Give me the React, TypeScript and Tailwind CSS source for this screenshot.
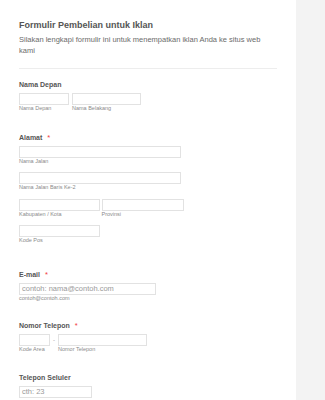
import type { ReactNode } from "react";

const font = { fontFamily: '"Liberation Sans", Arial, sans-serif' };

function Label({ children, required }: { children: ReactNode; required?: boolean }) {
  return (
    <div className="mb-[4px] flex items-center text-[7px] font-bold leading-[9px] text-[#555]">
      <span>{children}</span>
      {required && <span className="ml-[5px] text-[7.5px] font-normal text-[#f23a3c]">*</span>}
    </div>
  );
}

function Field({ width, sub, placeholder }: { width: string; sub?: string; placeholder?: string }) {
  return (
    <div className="flex flex-col">
      <div
        className={`h-[12px] border border-[#e2e2e2] bg-white px-[2px] text-[7.5px] leading-[10px] text-[#9a9a9a] ${width}`}
      >
        {placeholder}
      </div>
      {sub && <div className="text-[5.5px] leading-[7.5px] text-[#8a8a8a]">{sub}</div>}
    </div>
  );
}

export default function App() {
  return (
    <div className="flex h-[400px] w-[325px] overflow-hidden bg-[#f3f3f3]" style={font}>
      <main className="w-[296px] shrink-0 bg-white px-[19px] pt-[20px]">
        <h1 className="text-[9px] font-bold leading-[11px] text-[#555]">
          Formulir Pembelian untuk Iklan
        </h1>
        <p className="mt-[3px] w-[250px] text-[7.5px] leading-[11px] text-[#6b6b6b]">
          Silakan lengkapi formulir ini untuk menempatkan iklan Anda ke situs web kami
        </p>
        <div className="mt-[12px] border-t border-[#ededed]" />

        <section className="mt-[11px]">
          <Label>Nama Depan</Label>
          <div className="flex gap-[3px]">
            <Field width="w-[50px]" sub="Nama Depan" />
            <Field width="w-[69px]" sub="Nama Belakang" />
          </div>
        </section>

        <section className="mt-[20px]">
          <Label required>Alamat</Label>
          <div className="flex flex-col gap-[7px]">
            <Field width="w-[162px]" sub="Nama Jalan" />
            <Field width="w-[162px]" sub="Nama Jalan Baris Ke-2" />
            <div className="flex gap-[1.5px]">
              <Field width="w-[81px]" sub="Kabupaten / Kota" />
              <Field width="w-[82px]" sub="Provinsi" />
            </div>
            <Field width="w-[81px]" sub="Kode Pos" />
          </div>
        </section>

        <section className="mt-[25.5px]">
          <Label required>E-mail</Label>
          <Field width="w-[137px]" sub="contoh@contoh.com" placeholder="contoh: nama@contoh.com" />
        </section>

        <section className="mt-[18.5px]">
          <Label required>Nomor Telepon</Label>
          <div className="flex">
            <Field width="w-[31px]" sub="Kode Area" />
            <span className="w-[8px] text-center text-[6px] leading-[12px] text-[#999]">-</span>
            <Field width="w-[89px]" sub="Nomor Telepon" />
          </div>
        </section>

        <section className="mt-[19.5px]">
          <Label>Telepon Seluler</Label>
          <Field width="w-[73px]" placeholder="cth: 23" />
        </section>
      </main>
      <aside className="flex-1" />
    </div>
  );
}
